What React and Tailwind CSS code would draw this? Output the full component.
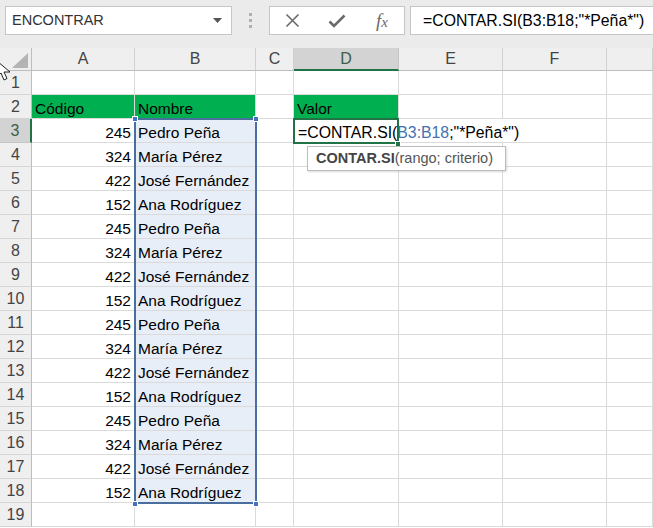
import React from "react";

const codes = [245, 324, 422, 152];
const names = ["Pedro Peña", "María Pérez", "José Fernández", "Ana Rodríguez"];
const cols = ["A", "B", "C", "D", "E", "F", ""];

const data = Array.from({ length: 16 }, (_, i) => ({
  code: codes[i % 4],
  name: names[i % 4],
}));

function ColHeader({ label }) {
  const active = label === "D";
  return (
    <div
      className={
        active
          ? "flex items-center justify-center bg-[#d3d3d3] border-r border-[#c4c4c4] border-b-2 border-b-[#217346] text-[#3c5e46] text-[16px]"
          : "flex items-center justify-center bg-[#efefef] border-r border-[#d0d0d0] border-b border-b-[#bdbdbd] text-[#444] text-[16px]"
      }
    >
      {label}
    </div>
  );
}

function RowHeader({ n }) {
  const active = n === 3;
  return (
    <div
      className={
        active
          ? "flex items-center justify-center bg-[#d3d3d3] border-r-2 border-r-[#217346] border-b border-[#c4c4c4] text-[#3c5e46] text-[16px]"
          : "flex items-center justify-center bg-[#efefef] border-r border-r-[#bdbdbd] border-b border-[#d4d4d4] text-[#444] text-[16px]"
      }
    >
      {n}
    </div>
  );
}

function Cell({ children, className = "" }) {
  return (
    <div
      className={
        "flex items-end px-[3px] leading-[18px] whitespace-nowrap text-[15.5px] text-black border-r border-b border-[#dadada] " +
        className
      }
    >
      {children}
    </div>
  );
}

function Row({ n }) {
  if (n === 2) {
    return (
      <>
        <RowHeader n={2} />
        <Cell className="bg-[#00b050] border-[#00b050] text-[#0f2f18]">Código</Cell>
        <Cell className="bg-[#00b050] border-[#00b050] text-[#0f2f18]">Nombre</Cell>
        <Cell />
        <Cell className="bg-[#00b050] border-[#00b050] text-[#0f2f18]">Valor</Cell>
        <Cell />
        <Cell />
        <Cell />
      </>
    );
  }
  if (n >= 3 && n <= 18) {
    const d = data[n - 3];
    return (
      <>
        <RowHeader n={n} />
        <Cell className="justify-end">{d.code}</Cell>
        <Cell className="bg-[#e8eef8] border-[#d2dae6]">{d.name}</Cell>
        <Cell />
        {n === 3 ? (
          <Cell className="border-r-0 overflow-visible pl-[4px] text-[15.8px]">
            <span>
              =CONTAR.SI(<span className="text-[#4471b4]">B3:B18</span>;"*Peña*")
            </span>
          </Cell>
        ) : (
          <Cell />
        )}
        <Cell className={n === 3 ? "border-r-0" : ""} />
        <Cell />
        <Cell />
      </>
    );
  }
  return (
    <>
      <RowHeader n={n} />
      {cols.map((c, i) => (
        <Cell key={i} />
      ))}
    </>
  );
}

export default function App() {
  return (
    <div className="relative w-[653px] h-[528px] overflow-hidden bg-white font-['Liberation_Sans',Arial,sans-serif]">
      {/* Formula bar */}
      <div className="flex h-[48px] bg-[#ebebeb] pt-[6px] pl-[5px]">
        <div className="flex items-center justify-between w-[227px] h-[29px] bg-white border border-[#c6c6c6] pl-[6px] pr-[9px] text-[14.5px] text-[#333]">
          <span>ENCONTRAR</span>
          <svg width="9" height="5" viewBox="0 0 9 5">
            <path d="M0 0h9L4.5 5z" fill="#555" />
          </svg>
        </div>
        <div className="flex flex-col items-center justify-center gap-[3px] w-[37px] h-[29px]">
          <span className="w-[3px] h-[3px] bg-[#b0b0b0]" />
          <span className="w-[3px] h-[3px] bg-[#b0b0b0]" />
          <span className="w-[3px] h-[3px] bg-[#b0b0b0]" />
        </div>
        <div className="flex items-center w-[136px] h-[29px] bg-white border border-[#c6c6c6]">
          <div className="flex justify-center w-[44px]">
            <svg width="15" height="15" viewBox="0 0 15 15">
              <path d="M1.5 1.5l12 12M13.5 1.5l-12 12" stroke="#6a6a6a" strokeWidth="1.6" fill="none" />
            </svg>
          </div>
          <div className="flex justify-center w-[46px]">
            <svg width="18" height="14" viewBox="0 0 18 14">
              <path d="M1.5 7.5l4.5 4.5L16.5 1.5" stroke="#6a6a6a" strokeWidth="2.6" fill="none" />
            </svg>
          </div>
          <div className="flex justify-center w-[44px] font-['Liberation_Serif',serif] italic text-[19px] text-[#6a6a6a] leading-none">
            <span>
              f<span className="text-[15px]">x</span>
            </span>
          </div>
        </div>
        <div className="flex items-center flex-1 h-[29px] ml-[5px] bg-white border border-r-0 border-[#c6c6c6] pl-[12px] text-[15.8px] text-black whitespace-nowrap">
          =CONTAR.SI(B3:B18;"*Peña*")
        </div>
      </div>

      {/* Sheet */}
      <div className="relative">
        <div className="grid grid-cols-[32px_103px_121px_38px_105px_104px_104px_46px] grid-rows-[23px_repeat(19,24px)]">
          <div className="relative bg-[#efefef] border-r border-r-[#bdbdbd] border-b border-b-[#bdbdbd]">
            <svg className="absolute left-[12px] top-[5px]" width="16" height="15" viewBox="0 0 16 15">
              <path d="M16 0V15H0z" fill="#b4b4b4" />
            </svg>
          </div>
          {cols.map((c, i) => (
            <ColHeader key={i} label={c} />
          ))}
          {Array.from({ length: 19 }, (_, i) => (
            <Row key={i} n={i + 1} />
          ))}
        </div>

        {/* Range highlight B3:B18 */}
        <div className="absolute left-[134px] top-[70px] w-[123px] h-[386px] border-2 border-[#4a6f9e] pointer-events-none" />
        <span className="absolute left-[132px] top-[68px] w-[6px] h-[6px] bg-[#4472c4] border border-white" />
        <span className="absolute left-[253px] top-[68px] w-[6px] h-[6px] bg-[#4472c4] border border-white" />
        <span className="absolute left-[132px] top-[453px] w-[6px] h-[6px] bg-[#4472c4] border border-white" />
        <span className="absolute left-[253px] top-[453px] w-[6px] h-[6px] bg-[#4472c4] border border-white" />

        {/* Active cell D3 */}
        <div className="absolute left-[293px] top-[70px] w-[106px] h-[26px] border-2 border-[#217346] pointer-events-none" />
        <span className="absolute left-[395px] top-[93px] w-[6px] h-[6px] bg-[#217346] border border-white" />

        {/* Function tooltip */}
        <div className="absolute left-[307px] top-[98px] w-[199px] h-[25px] flex items-center pl-[8px] bg-white border border-[#bcbcbc] shadow-[1px_1px_2px_rgba(0,0,0,0.15)] text-[14.5px] text-[#555] whitespace-nowrap">
          <span className="font-bold text-[#444]">CONTAR.SI</span>
          <span>(rango; criterio)</span>
        </div>
      </div>

      {/* Mouse pointer */}
      <svg className="absolute left-[-4px] top-[60px]" width="16" height="22" viewBox="0 0 16 22">
        <path d="M1 1v16l4-4 3 7 3-1.5-3-6.5h6z" fill="#fff" stroke="#222" strokeWidth="1" />
      </svg>
    </div>
  );
}
